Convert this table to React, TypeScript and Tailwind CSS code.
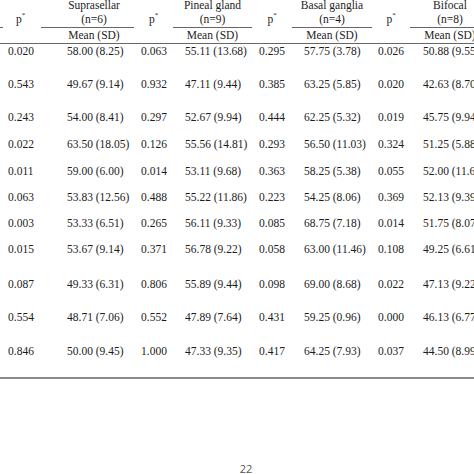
import React from 'react';

type Group = { name: string; n: string };

const GROUPS: Group[] = [
  { name: 'Suprasellar', n: '(n=6)' },
  { name: 'Pineal gland', n: '(n=9)' },
  { name: 'Basal ganglia', n: '(n=4)' },
  { name: 'Bifocal', n: '(n=8)' },
];

// each row: [p, mean, p, mean, p, mean, p, mean]
const ROWS: { mt: string; cells: string[] }[] = [
  { mt: 'mt-0', cells: ['0.020', '58.00 (8.25)', '0.063', '55.11 (13.68)', '0.295', '57.75 (3.78)', '0.026', '50.88 (9.55)'] },
  { mt: 'mt-[19px]', cells: ['0.543', '49.67 (9.14)', '0.932', '47.11 (9.44)', '0.385', '63.25 (5.85)', '0.020', '42.63 (8.70)'] },
  { mt: 'mt-[19px]', cells: ['0.243', '54.00 (8.41)', '0.297', '52.67 (9.94)', '0.444', '62.25 (5.32)', '0.019', '45.75 (9.94)'] },
  { mt: 'mt-[13px]', cells: ['0.022', '63.50 (18.05)', '0.126', '55.56 (14.81)', '0.293', '56.50 (11.03)', '0.324', '51.25 (5.88)'] },
  { mt: 'mt-[13px]', cells: ['0.011', '59.00 (6.00)', '0.014', '53.11 (9.68)', '0.363', '58.25 (5.38)', '0.055', '52.00 (11.61)'] },
  { mt: 'mt-[12px]', cells: ['0.063', '53.83 (12.56)', '0.488', '55.22 (11.86)', '0.223', '54.25 (8.06)', '0.369', '52.13 (9.39)'] },
  { mt: 'mt-[12px]', cells: ['0.003', '53.33 (6.51)', '0.265', '56.11 (9.33)', '0.085', '68.75 (7.18)', '0.014', '51.75 (8.07)'] },
  { mt: 'mt-[12px]', cells: ['0.015', '53.67 (9.14)', '0.371', '56.78 (9.22)', '0.058', '63.00 (11.46)', '0.108', '49.25 (6.61)'] },
  { mt: 'mt-[21px]', cells: ['0.087', '49.33 (6.31)', '0.806', '55.89 (9.44)', '0.098', '69.00 (8.68)', '0.022', '47.13 (9.22)'] },
  { mt: 'mt-[19px]', cells: ['0.554', '48.71 (7.06)', '0.552', '47.89 (7.64)', '0.431', '59.25 (0.96)', '0.000', '46.13 (6.77)'] },
  { mt: 'mt-[20px]', cells: ['0.846', '50.00 (9.45)', '1.000', '47.33 (9.35)', '0.417', '64.25 (7.93)', '0.037', '44.50 (8.99)'] },
];

const GRID = 'grid grid-cols-[41px_93px_39px_79px_40px_80px_38px_80px]';
const CELL_PAD = ['pl-[8px]', 'pl-[26px]', 'pl-[7px]', 'pl-[12px]', 'pl-[7px]', 'pl-[12px]', 'pl-[6px]', 'pl-[13px]'];
const HEAD_PAD = ['', 'pl-[13px]', '', '', '', '', '', ''];

const PStar: React.FC = () => (
  <span>
    p<sup className="text-[7px] -top-[0.9em]">*</sup>
  </span>
);

const App: React.FC = () => {
  return (
    <div
      className="w-[474px] h-[474px] overflow-hidden bg-white text-[#1c1c1c] text-[11.5px]"
      style={{ fontFamily: '"Liberation Serif", "Times New Roman", serif' }}
    >
      {/* group names */}
      <div className={`${GRID} -mt-[3px] w-[490px]`}>
        {GROUPS.map((g, i) => (
          <React.Fragment key={g.name}>
            <div className="h-[31px] flex flex-col">
              <div className="pt-[15px] leading-[14px] text-center">
                <PStar />
              </div>
              {i === 0 && <div className="mt-auto h-px w-[3px] bg-[#666]" />}
            </div>
            <div className="h-[31px] border-b border-[#666] pt-[1px] leading-[14px] whitespace-nowrap">
              <div className={`text-center ${HEAD_PAD[i * 2 + 1]}`}>{g.name}</div>
              <div className={`text-center ${HEAD_PAD[i * 2 + 1]}`}>{g.n}</div>
            </div>
          </React.Fragment>
        ))}
      </div>

      {/* Mean (SD) row */}
      <div className={`${GRID} w-[490px] h-[16px] border-b border-[#666] leading-[15px]`}>
        {GROUPS.map((g, i) => (
          <React.Fragment key={g.name}>
            <div />
            <div className={`text-center whitespace-nowrap ${HEAD_PAD[i * 2 + 1]}`}>Mean (SD)</div>
          </React.Fragment>
        ))}
      </div>

      {/* data */}
      {ROWS.map((row, r) => (
        <div key={r} className={`${GRID} w-[490px] h-[14px] leading-[14px] ${row.mt}`}>
          {row.cells.map((c, i) => (
            <div key={i} className={`whitespace-nowrap ${CELL_PAD[i]}`}>
              {c}
            </div>
          ))}
        </div>
      ))}

      <div className="mt-[19px] h-[2px] w-full bg-[#8a8a8a]" />

      <div
        className="mt-[84px] text-center text-[11px] leading-[12px] text-[#555] pl-[18px]"
        style={{ fontFamily: '"Open Sans", "Liberation Sans", sans-serif' }}
      >
        22
      </div>
    </div>
  );
};

export default App;
